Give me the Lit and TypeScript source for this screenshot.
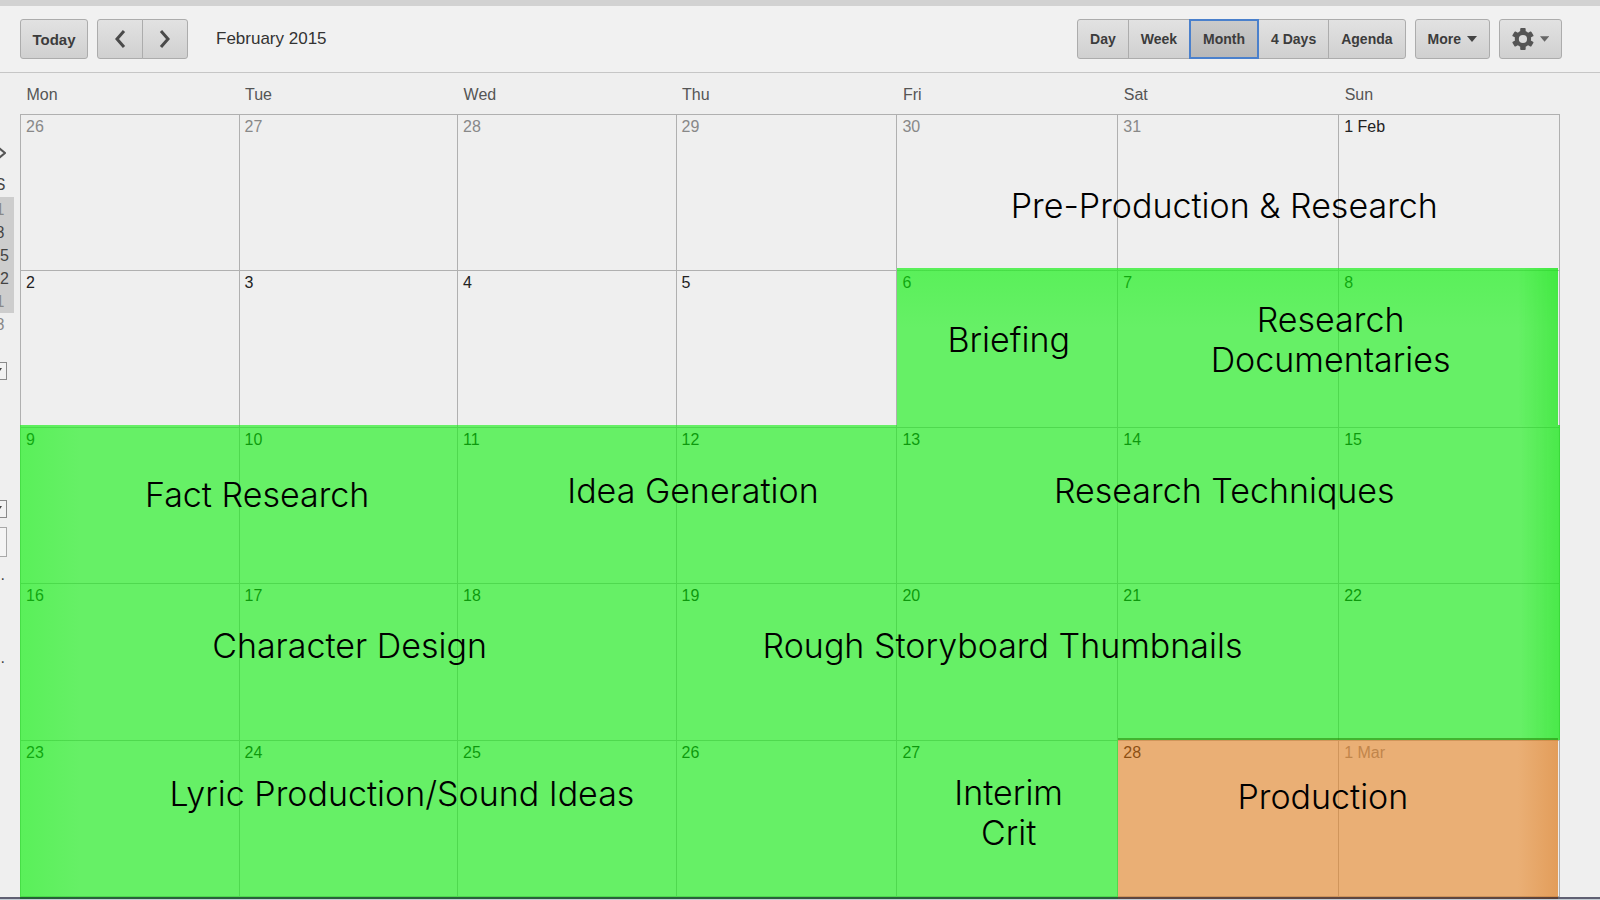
import { LitElement, html, css } from "lit";
import { customElement, state } from "lit/decorators.js";
import { classMap } from "lit/directives/class-map.js";
import { styleMap } from "lit/directives/style-map.js";

interface Note {
  lines: string[];
  x: number; // centre, % of the month's width
  y: number; // centre, % of the month's height
}

const WEEKDAYS = ["Mon", "Tue", "Wed", "Thu", "Fri", "Sat", "Sun"];
const VIEWS = ["Day", "Week", "Month", "4 Days", "Agenda"];

const WEEKS = [
  ["26", "27", "28", "29", "30", "31", "1 Feb"],
  ["2", "3", "4", "5", "6", "7", "8"],
  ["9", "10", "11", "12", "13", "14", "15"],
  ["16", "17", "18", "19", "20", "21", "22"],
  ["23", "24", "25", "26", "27", "28", "1 Mar"],
];

const NOTES: Note[] = [
  { lines: ["Pre-Production & Research"], x: 78.2, y: 11.7 },
  { lines: ["Briefing"], x: 64.2, y: 28.9 },
  { lines: ["Research", "Documentaries"], x: 85.1, y: 28.8 },
  { lines: ["Fact Research"], x: 15.4, y: 48.6 },
  { lines: ["Idea Generation"], x: 43.7, y: 48.2 },
  { lines: ["Research Techniques"], x: 78.2, y: 48.2 },
  { lines: ["Character Design"], x: 21.4, y: 68 },
  { lines: ["Rough Storyboard Thumbnails"], x: 63.8, y: 67.9 },
  { lines: ["Lyric Production/Sound Ideas"], x: 24.8, y: 86.8 },
  { lines: ["Interim", "Crit"], x: 64.2, y: 89.3 },
  { lines: ["Production"], x: 84.6, y: 87.2 },
];

@customElement("mini-sidebar")
export class MiniSidebar extends LitElement {
  static styles = css`
    :host {
      display: block;
      overflow: hidden;
      font-size: 16px;
      color: #444;
    }
    .strip {
      width: 28px;
      margin-left: -14px;
      padding-top: 70px;
      text-align: center;
    }
    .next {
      display: block;
      width: 28px;
      height: 20px;
      padding: 0;
      border: 0;
      background: none;
    }
    .next svg {
      display: block;
      margin: 0 auto;
    }
    .day {
      line-height: 24px;
      margin-top: 10px;
    }
    .month {
      background: #cdcdcd;
      padding: 1px 0 0;
    }
    .num {
      line-height: 23px;
    }
    .faded {
      color: #888;
    }
    .menu {
      display: flex;
      align-items: center;
      justify-content: flex-end;
      width: 21px;
      height: 18px;
      margin-top: 26px;
      padding: 0 4px 0 0;
      border: 1px solid #8a8a8a;
      background: #f2f2f2;
      box-sizing: border-box;
    }
    .menu.second {
      margin-top: 120px;
    }
    .field {
      display: block;
      width: 21px;
      height: 30px;
      margin-top: 9px;
      padding: 0;
      border: 1px solid #a8a8a8;
      background: #f4f4f4;
      box-sizing: border-box;
    }
    .more {
      width: 19px;
      margin-top: 8px;
      text-align: right;
      line-height: 20px;
    }
    .more.last {
      margin-top: 63px;
    }
  `;

  render() {
    const arrow = html`<svg width="8" height="6" viewBox="0 0 8 6">
      <path d="M0 0h8L4 6z" fill="#444" />
    </svg>`;
    return html`
      <div class="strip">
        <button class="next" aria-label="Next month">
          <svg width="12" height="12" viewBox="0 0 12 12">
            <path d="M5 1l6 5-6 5" fill="none" stroke="#555" stroke-width="2" />
          </svg>
        </button>
        <div class="day">S</div>
        <div class="month">
          <div class="num faded">1</div>
          <div class="num">8</div>
          <div class="num">15</div>
          <div class="num">22</div>
          <div class="num faded">1</div>
        </div>
        <div class="num faded">8</div>
        <button class="menu" aria-label="My calendars menu">${arrow}</button>
        <button class="menu second" aria-label="Other calendars menu">${arrow}</button>
        <input class="field" aria-label="Add a calendar" />
        <div class="more">.</div>
        <div class="more last">.</div>
      </div>
    `;
  }
}

@customElement("month-board")
export class MonthBoard extends LitElement {
  static styles = css`
    :host {
      display: block;
      position: relative;
    }
    .days {
      width: 100%;
      height: 100%;
      table-layout: fixed;
      border-collapse: collapse;
      font-size: 16px;
      line-height: 18px;
    }
    .weekday {
      width: 14.35%;
      height: 41px;
      padding: 4px 6px 0;
      box-sizing: border-box;
      text-align: left;
      font-weight: 400;
      color: #555;
    }
    .weekday:nth-child(-n + 3) {
      width: 14.2%;
    }
    .date {
      padding: 3px 5px;
      border: 1px solid #b0b0b0;
      vertical-align: top;
      color: #222;
    }
    .date.outside {
      color: #888;
    }
    .date.washed {
      color: #000;
    }
    .layer {
      position: absolute;
      inset: 41px 0 0;
      display: grid;
      grid-template-columns: repeat(3, 14.2%) repeat(4, 14.35%);
      grid-template-rows: repeat(5, minmax(0, 1fr));
      pointer-events: none;
    }
    .wash {
      background-color: rgba(22, 240, 22, 0.63);
    }
    .week2 {
      grid-area: 2 / 5 / 3 / 8;
      margin: -3px 2px 2px 0;
      background-image: linear-gradient(to left, rgba(20, 220, 20, 0.35), transparent 40px),
        linear-gradient(rgba(40, 240, 40, 0.2), transparent 60px);
    }
    .weeks34 {
      grid-area: 3 / 1 / 5 / 8;
      margin-top: -2px;
      background-image: linear-gradient(to left, rgba(20, 220, 20, 0.35), transparent 40px),
        linear-gradient(to right, rgba(40, 240, 40, 0.2), transparent 60px);
    }
    .week5 {
      grid-area: 5 / 1 / 6 / 6;
      margin-bottom: -2px;
      background-image: linear-gradient(to right, rgba(40, 240, 40, 0.2), transparent 60px);
    }
    .production {
      grid-area: 5 / 6 / 6 / 8;
      margin: -2px 2px -2px 0;
      border-top: 2px solid rgba(40, 140, 10, 0.6);
      background-color: rgba(230, 132, 35, 0.6);
      background-image: linear-gradient(to left, rgba(215, 130, 50, 0.4), transparent 40px);
      background-clip: padding-box;
    }
    .note {
      position: absolute;
      transform: translate(-50%, -50%);
      font-family: Inter, "Century Gothic", sans-serif;
      font-weight: 300;
      font-size: 34px;
      line-height: 40px;
      text-align: center;
      white-space: nowrap;
      color: #000;
    }
    .line {
      display: block;
    }
  `;

  render() {
    return html`
      <table class="days">
        <thead>
          <tr>
            ${WEEKDAYS.map((d) => html`<th class="weekday" scope="col">${d}</th>`)}
          </tr>
        </thead>
        <tbody>
          ${WEEKS.map(
            (week, w) => html`<tr>
              ${week.map((d, i) => {
                const outside = (w === 0 && i < 6) || (w === 4 && i === 6);
                const washed = !outside && (w > 1 || (w === 1 && i > 3));
                return html`<td class=${classMap({ date: true, outside, washed })}>${d}</td>`;
              })}
            </tr>`
          )}
        </tbody>
      </table>
      <div class="layer">
        <div class="wash week2"></div>
        <div class="wash weeks34"></div>
        <div class="wash week5"></div>
        <div class="wash production"></div>
        ${NOTES.map(
          (n) => html`<div class="note" style=${styleMap({ left: `${n.x}%`, top: `${n.y}%` })}>
            ${n.lines.map((l) => html`<span class="line">${l}</span>`)}
          </div>`
        )}
      </div>
    `;
  }
}

@customElement("app-root")
export class AppRoot extends LitElement {
  @state() private view = "Month";

  static styles = css`
    :host {
      display: flex;
      flex-direction: column;
      height: 100vh;
      overflow: hidden;
      background: #efefef;
      font-family: "Liberation Sans", Arial, sans-serif;
    }
    .top {
      flex: none;
      height: 6px;
      background: #d2d2d2;
    }
    .toolbar {
      flex: none;
      display: flex;
      align-items: center;
      gap: 9px;
      height: 67px;
      padding: 0 38px 0 20px;
      box-sizing: border-box;
      border-bottom: 1px solid #c6c6c6;
      background: #f1f1f1;
    }
    .title {
      flex: 1;
      margin: 0 0 0 19px;
      font-size: 17px;
      font-weight: 400;
      color: #333;
    }
    .group {
      display: flex;
    }
    .button {
      display: flex;
      align-items: center;
      justify-content: center;
      gap: 6px;
      height: 40px;
      padding: 0 12px;
      box-sizing: border-box;
      border: 1px solid #acacac;
      border-radius: 3px;
      background: linear-gradient(#e2e2e2, #d0d0d0);
      font: bold 14px "Liberation Sans", Arial, sans-serif;
      color: #3c3c3c;
      white-space: nowrap;
    }
    .group .button {
      border-radius: 0;
    }
    .group .button + .button {
      margin-left: -1px;
    }
    .group .button:first-child {
      border-radius: 3px 0 0 3px;
    }
    .group .button:last-child {
      border-radius: 0 3px 3px 0;
    }
    .today {
      width: 68px;
      font-size: 15px;
    }
    .step {
      width: 46px;
    }
    .group .selected {
      z-index: 1;
      border: 2px solid #4a80cc;
      background: linear-gradient(#cacaca, #b8b8b8);
    }
    .gear {
      width: 63px;
    }
    .body {
      flex: 1;
      min-height: 0;
      display: grid;
      grid-template-columns: 20px minmax(0, 1fr) 40px;
      grid-template-rows: minmax(0, 1fr);
    }
    .foot {
      flex: none;
      position: relative;
      z-index: 1;
      height: 3px;
      box-sizing: border-box;
      border-bottom: 1px solid #c3ccd4;
      background: rgba(0, 0, 30, 0.6);
      background-clip: padding-box;
    }
  `;

  render() {
    return html`
      <div class="top"></div>
      <header class="toolbar">
        <button class="button today">Today</button>
        <div class="group">
          <button class="button step" aria-label="Previous month">
            <svg width="12" height="20" viewBox="0 0 12 20">
              <path d="M10 2L3 10l7 8" fill="none" stroke="#4a4a4a" stroke-width="3" />
            </svg>
          </button>
          <button class="button step" aria-label="Next month">
            <svg width="12" height="20" viewBox="0 0 12 20">
              <path d="M2 2l7 8-7 8" fill="none" stroke="#4a4a4a" stroke-width="3" />
            </svg>
          </button>
        </div>
        <h1 class="title">February 2015</h1>
        <div class="group">
          ${VIEWS.map(
            (v) => html`<button
              class=${classMap({ button: true, selected: v === this.view })}
              @click=${() => (this.view = v)}
            >
              ${v}
            </button>`
          )}
        </div>
        <button class="button">
          More
          <svg width="10" height="6" viewBox="0 0 10 6"><path d="M0 0h10L5 6z" fill="#444" /></svg>
        </button>
        <button class="button gear" aria-label="Settings">
          <svg width="24" height="24" viewBox="0 0 24 24">
            <g fill="#555">
              <rect x="9" y="0" width="6" height="24" rx="1" />
              <rect x="9" y="0" width="6" height="24" rx="1" transform="rotate(60 12 12)" />
              <rect x="9" y="0" width="6" height="24" rx="1" transform="rotate(120 12 12)" />
              <circle cx="12" cy="12" r="9" />
            </g>
            <circle cx="12" cy="12" r="4.5" fill="#dcdcdc" />
          </svg>
          <svg width="10" height="6" viewBox="0 0 10 6"><path d="M0 0h10L5 6z" fill="#666" /></svg>
        </button>
      </header>
      <div class="body">
        <mini-sidebar></mini-sidebar>
        <month-board></month-board>
      </div>
      <div class="foot"></div>
    `;
  }
}
